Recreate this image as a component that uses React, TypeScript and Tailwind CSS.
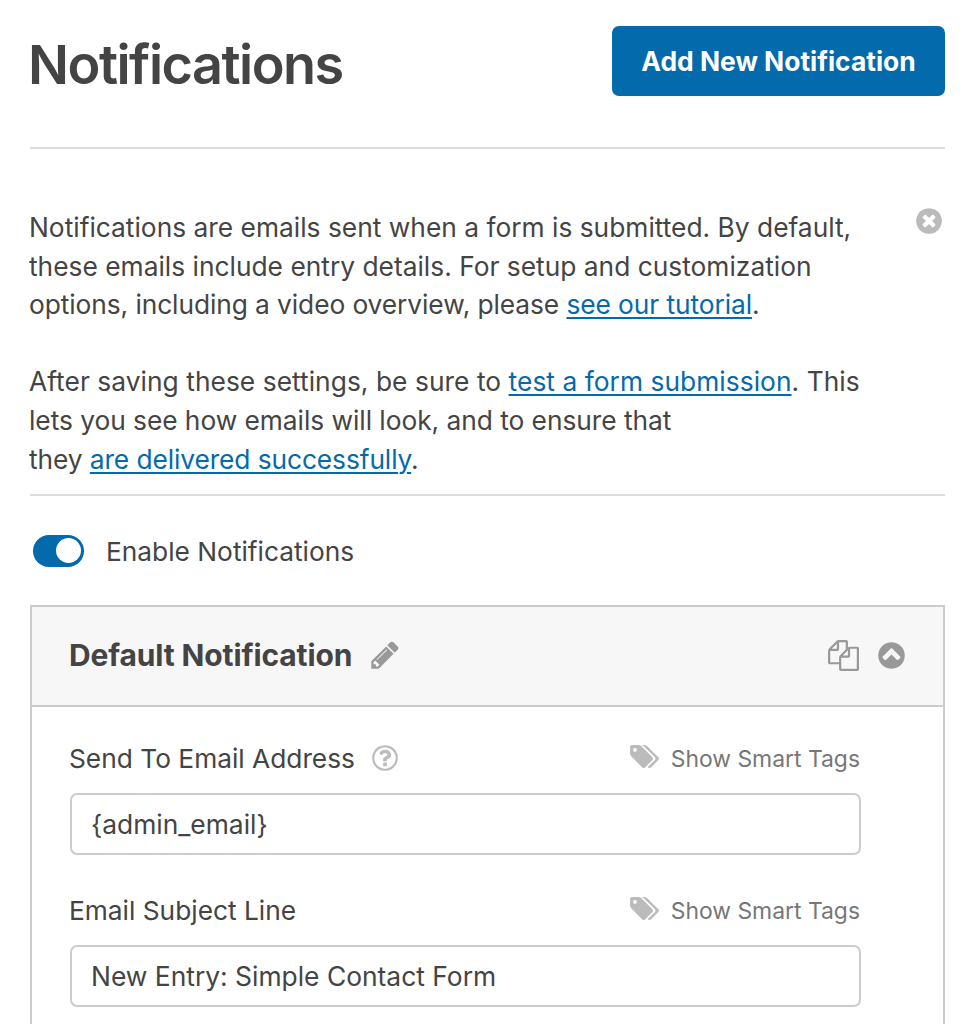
import { useState } from "react";

type Field = {
  id: string;
  label: string;
  value: string;
  hasHelp: boolean;
};

const FIELDS: Field[] = [
  { id: "email", label: "Send To Email Address", value: "{admin_email}", hasHelp: true },
  {
    id: "subject",
    label: "Email Subject Line",
    value: "New Entry: Simple Contact Form",
    hasHelp: false,
  },
];

const DISC =
  "q0 209-103 385.5t-279.5 279.5-385.5 103-385.5-103-279.5-279.5-103-385.5 103-385.5 279.5-279.5 385.5-103 385.5 103 279.5 279.5 103 385.5z";

const ICONS = {
  close: `M1277 1122q0-26-19-45l-181-181 181-181q19-19 19-45 0-27-19-46l-90-90q-19-19-46-19-26 0-45 19l-181 181-181-181q-19-19-45-19-27 0-46 19l-90 90q-19 19-19 46 0 26 19 45l181 181-181 181q-19 19-19 45 0 27 19 46l90 90q19 19 46 19 26 0 45-19l181-181 181 181q19 19 45 19 27 0 46-19l90-90q19-19 19-46zm387-226${DISC}`,
  chevronUp: `M1293 1139l102-102q19-19 19-45t-19-45l-454-454q-19-19-45-19t-45 19l-454 454q-19 19-19 45t19 45l102 102q19 19 45 19t45-19l307-307 307 307q19 19 45 19t45-19zm371-243${DISC}`,
  help: `M1008 1200v160q0 14-9 23t-23 9h-160q-14 0-23-9t-9-23v-160q0-14 9-23t23-9h160q14 0 23 9t9 23zm256-496q0 50-15 90t-45.5 69-52 44-59.5 36q-32 18-46.5 28t-26 24-11.5 29v32q0 14-9 23t-23 9h-160q-14 0-23-9t-9-23v-68q0-35 10.5-64.5t24-47.5 39-35.5 41-25.5 44.5-21q53-25 75-43t22-49q0-42-43.5-71.5t-95.5-29.5q-56 0-95 27-29 20-80 83-9 12-25 12-11 0-19-6l-108-82q-10-7-12-20t5-23q122-192 349-192 129 0 238.5 89.5t109.5 214.500zm-368-448q-130 0-248.5 51t-204 136.5-136.5 204-51 248.5 51 248.5 136.5 204 204 136.5 248.5 51 248.5-51 204-136.5 136.5-204 51-248.5-51-248.5-136.5-204-204-136.5-248.5-51zm768 640${DISC}`,
  pencil:
    "M491 1536l91-91-235-235-91 91v107h128v128h107zm523-928q0-22-22-22-10 0-17 7l-542 542q-7 7-7 17 0 22 22 22 10 0 17-7l542-542q7-7 7-17zm-54-192l416 416-832 832h-416v-416zm683 96q0 53-37 90l-166 166-416-416 166-165q36-38 90-38 53 0 91 38l235 234q37 39 37 91z",
  copy: "M1696 384q40 0 68 28t28 68v1216q0 40-28 68t-68 28h-960q-40 0-68-28t-28-68v-288h-544q-40 0-68-28t-28-68v-672q0-40 20-88t48-76l408-408q28-28 76-48t88-20h416q40 0 68 28t28 68v328q68-40 128-40h416zm-544 213l-299 299h299v-299zm-640-384l-299 299h299v-299zm196 647l316-316v-416h-384v416q0 40-28 68t-68 28h-416v640h512v-256q0-40 20-88t48-76zm956 804v-1152h-384v416q0 40-28 68t-68 28h-416v640h896z",
};

function Icon({ name, className }: { name: keyof typeof ICONS; className: string }) {
  return (
    <svg viewBox="0 0 1792 1792" fill="currentColor" className={className}>
      <path d={ICONS[name]} />
    </svg>
  );
}

function TagsIcon() {
  return (
    <svg
      viewBox="0 128 1899 1515"
      fill="currentColor"
      className="mt-[-5px] mr-3 h-[23px] w-[29px] text-[#bbb]"
    >
      <path d="M448 448q0-53-37.5-90.5t-90.5-37.5-90.5 37.5-37.5 90.5 37.5 90.5 90.5 37.5 90.5-37.5 37.5-90.5zm1067 576q0 53-37 90l-491 492q-39 37-91 37-53 0-90-37l-715-716q-38-37-64.5-101t-26.5-117v-416q0-52 38-90t90-38h416q53 0 117 26.5t102 64.5l715 714q37 39 37 91zm384 0q0 53-37 90l-491 492q-39 37-91 37-36 0-59-14t-53-45l470-470q37-37 37-90 0-52-37-91l-715-714q-38-38-102-64.5t-117-26.5h224q53 0 117 26.5t102 64.5l715 714q37 39 37 91z" />
    </svg>
  );
}

function TextLink({ children }: { children: string }) {
  return (
    <a
      href="#"
      className="text-[#036aab] underline decoration-2 underline-offset-[3px]"
    >
      {children}
    </a>
  );
}

function FieldRow({ field }: { field: Field }) {
  const [value, setValue] = useState(field.value);

  return (
    <div>
      <div className="flex h-9 items-center">
        <label htmlFor={field.id} className="-ml-px text-[26.3px]">
          {field.label}
        </label>
        {field.hasHelp && (
          <Icon name="help" className="-mt-0.5 ml-[15px] size-[30px] text-[#bbb]" />
        )}
        <button type="button" className="ml-auto flex items-center text-[#777]">
          <TagsIcon />
          <span className="mr-px text-[22.9px]">Show Smart Tags</span>
        </button>
      </div>
      <input
        id={field.id}
        value={value}
        onChange={(event) => setValue(event.target.value)}
        className="mt-4 block h-[62px] w-full rounded-[7px] border-2 border-[#ccc] bg-white px-[19px] text-[26.4px]"
      />
    </div>
  );
}

export default function App() {
  const [enabled, setEnabled] = useState(true);

  return (
    <div className="h-[1024px] overflow-hidden bg-white pr-[33px] pl-[30px] font-['Inter',sans-serif] text-[#444]">
      <header className="flex h-[149px] items-start justify-between border-b-2 border-[#ddd] pt-[26px]">
        <h1 className="-ml-[2px] text-[54px] leading-[78px] font-semibold tracking-[-1.5px]">
          Notifications
        </h1>
        <button
          type="button"
          className="h-[70px] w-[333px] rounded-[7px] bg-[#036aab] pt-0.5 text-[26.4px] font-bold whitespace-nowrap text-white"
        >
          Add New Notification
        </button>
      </header>

      <section className="flex h-[347px] items-start justify-between border-b-2 border-[#ddd] pt-[59px]">
        <div className="-ml-px text-[26.35px] leading-[38.6px] whitespace-nowrap">
          <p>
            Notifications are emails sent when a form is submitted. By default,
            <br />
            these emails include entry details. For setup and customization
            <br />
            <span className="tracking-[-0.09px]">
              options, including a video overview, please <TextLink>see our tutorial</TextLink>.
            </span>
          </p>
          <p className="mt-[38.6px]">
            <span className="tracking-[0.04px]">
              After saving these settings, be sure to <TextLink>test a form submission</TextLink>.
              This
            </span>
            <br />
            <span className="tracking-[-0.05px]">
              lets you see how emails will look, and to ensure that
            </span>
            <br />
            <span className="tracking-[-0.1px]">
              they <TextLink>are delivered successfully</TextLink>.
            </span>
          </p>
        </div>
        <button type="button" aria-label="Dismiss" className="-mt-0.5 mr-px">
          <Icon name="close" className="size-[30px] text-[#bbb]" />
        </button>
      </section>

      <div className="flex h-[109px] items-center pl-[3px]">
        <button
          type="button"
          role="switch"
          aria-checked={enabled}
          aria-labelledby="enable-label"
          onClick={() => setEnabled(!enabled)}
          className={`flex h-8 w-[51px] items-center rounded-full px-[3px] ${
            enabled ? "justify-end bg-[#036aab]" : "justify-start bg-[#bbb]"
          }`}
        >
          <span className="size-[25px] rounded-full bg-white" />
        </button>
        <span id="enable-label" className="mt-0.5 ml-[22px] text-[26.3px]">
          Enable Notifications
        </span>
      </div>

      <section className="h-[440px] border-2 border-[#ccc]">
        <div className="flex h-[100px] items-center border-b-2 border-[#ccc] bg-[#f7f7f7] pr-9 pb-0.5 pl-[37px]">
          <h2 className="w-[286px] text-[30px] font-bold tracking-[-0.13px] whitespace-nowrap">
            Default Notification
          </h2>
          <Icon name="pencil" className="ml-[14px] size-[32px] text-[#999]" />
          <Icon name="copy" className="ml-auto size-[31px] text-[#999]" />
          <Icon name="chevronUp" className="ml-[17px] size-[31px] text-[#999]" />
        </div>
        <div className="flex flex-col gap-[38px] pt-[34px] pr-[82px] pl-[38px]">
          {FIELDS.map((field) => (
            <FieldRow key={field.id} field={field} />
          ))}
        </div>
      </section>
    </div>
  );
}
